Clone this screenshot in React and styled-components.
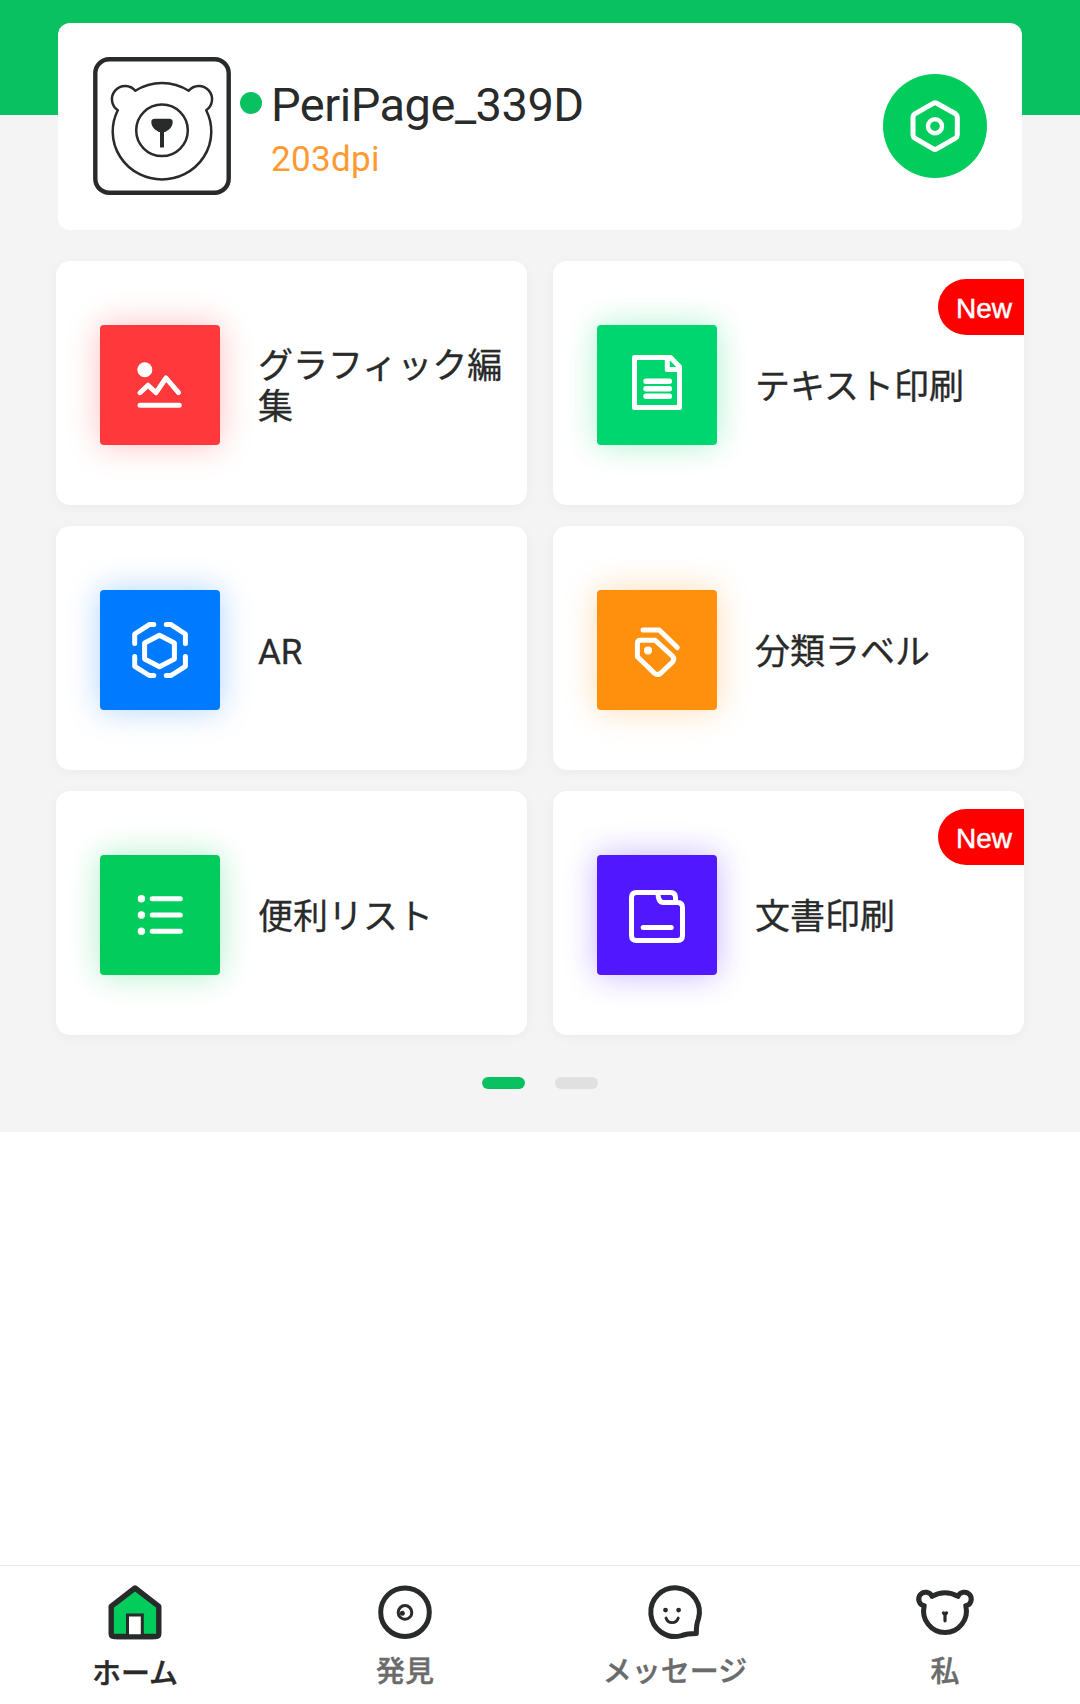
import styled, { createGlobalStyle } from 'styled-components';

const GlobalStyle = createGlobalStyle`
  * {
    box-sizing: border-box;
  }
  body {
    margin: 0;
    background: #fff;
    color: #292a2a;
    font-family: Roboto, "Noto Sans CJK JP", sans-serif;
  }
`;

const Screen = styled.div`
  display: flex;
  flex-direction: column;
  width: 1080px;
  height: 1704px;
  overflow: hidden;
`;

const Home = styled.main`
  height: 1132px;
  padding: 23px 56px 0;
  background: linear-gradient(#09c160 115px, #f4f4f4 115px);
`;

const DeviceCard = styled.section`
  display: flex;
  align-items: center;
  height: 207px;
  margin: 0 2px 31px;
  padding: 0 35px 1px;
  background: #fff;
  border-radius: 12px;
`;

const DeviceInfo = styled.div`
  flex: 1;
  margin-left: 9px;
  padding-top: 12px;
`;

const DeviceName = styled.div`
  display: flex;
  align-items: center;
  font-size: 47px;
  line-height: 54px;
  letter-spacing: -0.5px;
`;

const StatusDot = styled.span`
  width: 22px;
  height: 22px;
  margin: -4px 9px 0 0;
  border-radius: 50%;
  background: #09c160;
`;

const Resolution = styled.div`
  margin-left: 31px;
  color: #ff9a33;
  font-size: 35px;
  line-height: 55px;
  letter-spacing: 0.3px;
`;

const SettingsButton = styled.button`
  width: 104px;
  height: 104px;
  padding: 0;
  border: 0;
  border-radius: 50%;
  background: #02cc5b;
`;

const Grid = styled.div`
  display: grid;
  grid-template-columns: repeat(2, 471px);
  gap: 21px 26px;
`;

const Card = styled.a`
  position: relative;
  display: flex;
  align-items: center;
  height: 244px;
  padding: 4px 20px 0 44px;
  background: #fff;
  border-radius: 14px;
  box-shadow: 0 2px 12px rgba(0, 0, 0, 0.04);
`;

const Tile = styled.span`
  flex: none;
  width: 120px;
  height: 120px;
  margin-right: 38px;
  border-radius: 4px;
  background: ${props => props.$color};
  box-shadow: 0 0 32px ${props => props.$color}52;
`;

const CardLabel = styled.span`
  padding-top: 4px;
  font-size: 35px;
  line-height: 41px;
  -webkit-text-stroke: 0.3px currentColor;
`;

const Badge = styled.span`
  position: absolute;
  top: 18px;
  right: 0;
  width: 86px;
  height: 56px;
  padding-left: 18px;
  border-radius: 28px 0 0 28px;
  background: #f00;
  color: #fff;
  font: 28px/60px "Liberation Sans", sans-serif;
  -webkit-text-stroke: 0.5px #fff;
`;

const Pager = styled.div`
  display: flex;
  justify-content: center;
  gap: 30px;
  margin-top: 42px;
`;

const PagerDot = styled.span`
  width: 43px;
  height: 12px;
  border-radius: 6px;
  background: ${props => props.$active ? '#09c160' : '#e0e0e0'};
`;

const TabBar = styled.nav`
  display: grid;
  grid-template-columns: repeat(4, 1fr);
  height: 139px;
  margin-top: auto;
  border-top: 1px solid #e9e9e9;
`;

const Tab = styled.a`
  display: flex;
  flex-direction: column;
  align-items: center;
  padding-top: 16px;
  color: ${props => props.$active ? '#292a2a' : '#6b6b6b'};
`;

const TabLabel = styled.span`
  margin-top: ${props => props.$active ? 11 : 9}px;
  font-size: 29px;
  font-weight: 500;
  line-height: 42px;
  -webkit-text-stroke: 0.4px currentColor;
`;

const Line = styled.svg`
  display: block;
  fill: none;
  stroke: ${props => props.$stroke || '#fff'};
  stroke-width: 5;
  stroke-linecap: round;
  stroke-linejoin: round;
`;

const TileIcon = ({ children }) => (
  <Line width="120" height="120" viewBox="0 0 120 120">{children}</Line>
);

const TabIcon = ({ children }) => (
  <Line $stroke="#292a2a" width="60" height="60" viewBox="0 0 60 60">{children}</Line>
);

const BearLogo = () => (
  <Line $stroke="#292a2a" width="138" height="138" viewBox="0 0 138 138">
    <rect x="2.3" y="2.3" width="133.4" height="133.4" rx="14" strokeWidth="4.4" fill="#fff" />
    <g strokeWidth="2.5">
      <path d="M42.3 33.8 A49.5 49.5 0 0 1 95.7 33.8 A13.2 13.2 0 1 1 113.2 53.2 A49.3 48 0 1 1 24.8 53.2 A13.2 13.2 0 1 1 42.3 33.8Z" />
      <circle cx="69" cy="73.3" r="25.8" />
    </g>
    <path d="M59 65 Q59 62.5 62 62.5 H76 Q79 62.5 79 65 C79 70 74 74.5 69 74.5 S59 70 59 65Z" fill="#292a2a" strokeWidth="1.4" />
    <path d="M69 73 V90.5" strokeWidth="4" strokeLinecap="butt" />
  </Line>
);

const features = [
  {
    label: 'グラフィック編集', color: '#ff383c',
    icon: <>
      <circle cx="44.8" cy="44.7" r="7.5" fill="#fff" stroke="none" />
      <path d="M40 67.7 L48 60.2 L56 67.7 L66 53 L78.5 67.7 M40 80.2 H79.3" />
    </>,
  },
  {
    label: 'テキスト印刷', color: '#00d66f', isNew: true,
    icon: <>
      <path d="M37.5 32.5 H73.5 L82.5 41.7 V82.5 H37.5Z M70.3 32.5 V44.5 H82.5" />
      <path d="M49 56.2 H72.4 M49 63.8 H72.4 M49 71.3 H72.4" strokeWidth="5.4" />
    </>,
  },
  {
    label: 'AR', color: '#007aff',
    icon: <>
      <path d="M53.8 34.6 H49.3 L34.7 44 V53.5 M66.3 34.6 H71 L85.4 44 V53.5 M34.7 66.5 V76.3 L49.3 85.5 H53.8 M85.4 66.5 V76.3 L71 85.5 H66.3" />
      <path d="M59.5 45.2 L74.4 53 V69 L59.5 76.7 L44.6 69 V53Z" />
    </>,
  },
  {
    label: '分類ラベル', color: '#ff900d',
    icon: <>
      <path d="M46 40 H62.3 L80.3 57.5" />
      <path d="M43.5 50.2 H58 L75.3 66 Q78.3 69 75.3 72.2 L64 83 Q60.5 86 57.2 83 L40.4 66.8 V53.5 Q40.4 50.2 43.5 50.2Z" />
      <circle cx="51" cy="60.4" r="4" fill="#fff" stroke="none" />
    </>,
  },
  {
    label: '便利リスト', color: '#02cc5b',
    icon: <>
      <g fill="#fff" stroke="none">
        <circle cx="41.4" cy="43.7" r="3.7" />
        <circle cx="41.4" cy="60" r="3.7" />
        <circle cx="41.4" cy="76.2" r="3.7" />
      </g>
      <path d="M52.2 43.7 H80.3 M52.2 60 H80.3 M52.2 76.2 H80.3" />
    </>,
  },
  {
    label: '文書印刷', color: '#5118ff', isNew: true,
    icon: <>
      <path d="M61 37.5 Q61 47.5 66.5 47.5 H80.5 Q85.5 47.5 85.5 52.5 V80.5 Q85.5 85.5 80.5 85.5 H39.5 Q34.5 85.5 34.5 80.5 V42.5 Q34.5 37.5 39.5 37.5 H73.5 Q78.5 37.5 78.5 42.5 V47" />
      <path d="M46.2 72.4 H74.2" />
    </>,
  },
];

const tabs = [
  {
    label: 'ホーム', active: true,
    icon: <>
      <path d="M30 6 L53.8 24.3 V51.5 Q53.8 54.5 50.8 54.5 H9.2 Q6.2 54.5 6.2 51.5 V24.3Z" fill="#02cc5b" strokeWidth="5.4" />
      <path d="M22.5 54 V33 H37.3 V54" fill="#fff" strokeWidth="3" strokeLinejoin="miter" />
      <path d="M12 54.8 H48" />
    </>,
  },
  {
    label: '発見',
    icon: <>
      <circle cx="30" cy="30.2" r="24.3" />
      <circle cx="30" cy="30.4" r="6.8" strokeWidth="3" />
      <circle cx="27.3" cy="31.2" r="2.5" fill="#292a2a" stroke="none" />
    </>,
  },
  {
    label: 'メッセージ',
    icon: <>
      <path d="M36.5 53.6 A24.3 24.3 0 1 1 53.4 37 Q51.3 42 51.3 51.4 Q42 51.4 36.5 53.6Z" />
      <g fill="#292a2a" stroke="none">
        <circle cx="20.5" cy="28.1" r="2.4" />
        <circle cx="33.6" cy="28.1" r="2.4" />
      </g>
      <path d="M21 36 C23 42.2 31.3 42.2 33.3 36" strokeWidth="2.8" />
    </>,
  },
  {
    label: '私',
    icon: <>
      <path d="M17 14.4 Q30 7 43 14.4 A6.9 6.9 0 1 1 50.8 23.8 A21.4 21.6 0 1 1 9.2 23.8 A6.9 6.9 0 1 1 17 14.4Z" />
      <path d="M28.4 30.9 L30 32 L31.6 30.9 L30 33Z M30 33 V38.8" strokeWidth="3.2" />
    </>,
  },
];

const App = () => {
  return <Screen>
    <GlobalStyle />
    <Home>
      <DeviceCard>
        <BearLogo />
        <DeviceInfo>
          <DeviceName><StatusDot />PeriPage_339D</DeviceName>
          <Resolution>203dpi</Resolution>
        </DeviceInfo>
        <SettingsButton aria-label="設定">
          <Line width="104" height="104" viewBox="0 0 104 104">
            <path d="M50.3 29.3 Q52 28.3 53.7 29.3 L72.5 39.8 Q74.3 41 74.3 43 V61 Q74.3 63 72.5 64.2 L53.7 74.9 Q52 75.9 50.3 74.9 L31.8 64.2 Q30 63 30 61 V43 Q30 41 31.8 39.8Z" />
            <circle cx="52" cy="52.2" r="7" strokeWidth="4.4" />
          </Line>
        </SettingsButton>
      </DeviceCard>
      <Grid>
        {features.map(item => (
          <Card key={item.label}>
            <Tile $color={item.color}><TileIcon>{item.icon}</TileIcon></Tile>
            <CardLabel>{item.label}</CardLabel>
            {item.isNew && <Badge>New</Badge>}
          </Card>
        ))}
      </Grid>
      <Pager>
        <PagerDot $active />
        <PagerDot />
      </Pager>
    </Home>
    <TabBar>
      {tabs.map(tab => (
        <Tab key={tab.label} $active={tab.active}>
          <TabIcon>{tab.icon}</TabIcon>
          <TabLabel $active={tab.active}>{tab.label}</TabLabel>
        </Tab>
      ))}
    </TabBar>
  </Screen>;
}

export default App;
